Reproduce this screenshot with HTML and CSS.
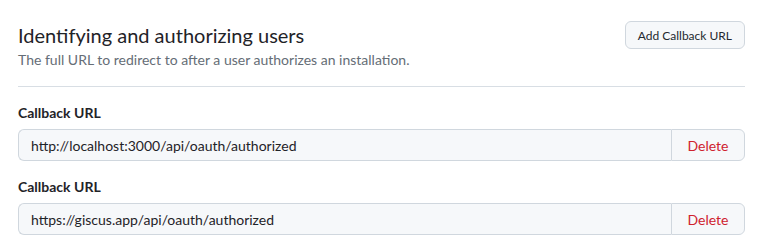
FILE: index.html
```html
<!DOCTYPE html>
<html lang="en">
<head>
    <meta charset="UTF-8">
    <title>Identifying and authorizing users</title>
    <link rel="stylesheet" href="styles.css">
</head>
<body>

    <!-- Section header -->
    <div class="subhead">
        <div class="subhead-text">
            <h2 class="subhead-heading">Identifying and authorizing users</h2>
            <p class="subhead-desc">The full URL to redirect to after a user authorizes an installation.</p>
        </div>
        <button class="btn btn-sm" type="button">Add Callback URL</button>
    </div>

    <!-- Callback URL list -->
    <div class="form-group">
        <label class="form-label">Callback URL</label>
        <div class="input-group">
            <input class="form-control" type="text" value="http://localhost:3000/api/oauth/authorized">
            <button class="btn btn-danger" type="button">Delete</button>
        </div>
    </div>

    <div class="form-group">
        <label class="form-label">Callback URL</label>
        <div class="input-group">
            <input class="form-control" type="text" value="https://giscus.app/api/oauth/authorized">
            <button class="btn btn-danger" type="button">Delete</button>
        </div>
    </div>

</body>
</html>
```

FILE: styles.css
```css
/* === Global === */
body {
    margin: 0;
    padding: 20px 19px 0 18px;
    background: #ffffff;
    color: #1f2328;
    font-family: Lato, "Noto Sans", sans-serif;
    font-size: 14px;
}

/* === Subhead === */
.subhead {
    display: flex;
    align-items: flex-start;
    justify-content: space-between;
    padding-bottom: 16px;
    border-bottom: 1px solid #d8dee4;
}

.subhead-heading {
    margin: 0;
    font-size: 20px;
    font-weight: 400;
    line-height: 30px;
}

.subhead-desc {
    margin: 0;
    font-size: 14px;
    line-height: 20px;
    color: #656d76;
}

/* === Buttons === */
.btn {
    font-family: inherit;
    cursor: pointer;
    background: #f6f8fa;
    border: 1px solid #d0d7de;
    border-radius: 6px;
    color: #24292f;
}

.btn-sm {
    height: 28px;
    padding: 0 12px;
    font-size: 12px;
    margin-top: 1px;
}

.btn-danger {
    color: #cf222e;
    font-size: 14px;
    width: 74px;
    border-top-left-radius: 0;
    border-bottom-left-radius: 0;
}

/* === Form rows === */
.form-group {
    margin-top: 16px;
}

.form-label {
    display: block;
    font-weight: 700;
    font-size: 14px;
    line-height: 20px;
    margin-bottom: 6px;
}

.input-group {
    display: flex;
    height: 32px;
}

.form-control {
    flex: 1;
    min-width: 0;
    padding: 0 12px;
    font-family: inherit;
    font-size: 14px;
    color: #1f2328;
    background: #f6f8fa;
    border: 1px solid #d0d7de;
    border-right: none;
    border-radius: 6px 0 0 6px;
    outline: none;
}
```
